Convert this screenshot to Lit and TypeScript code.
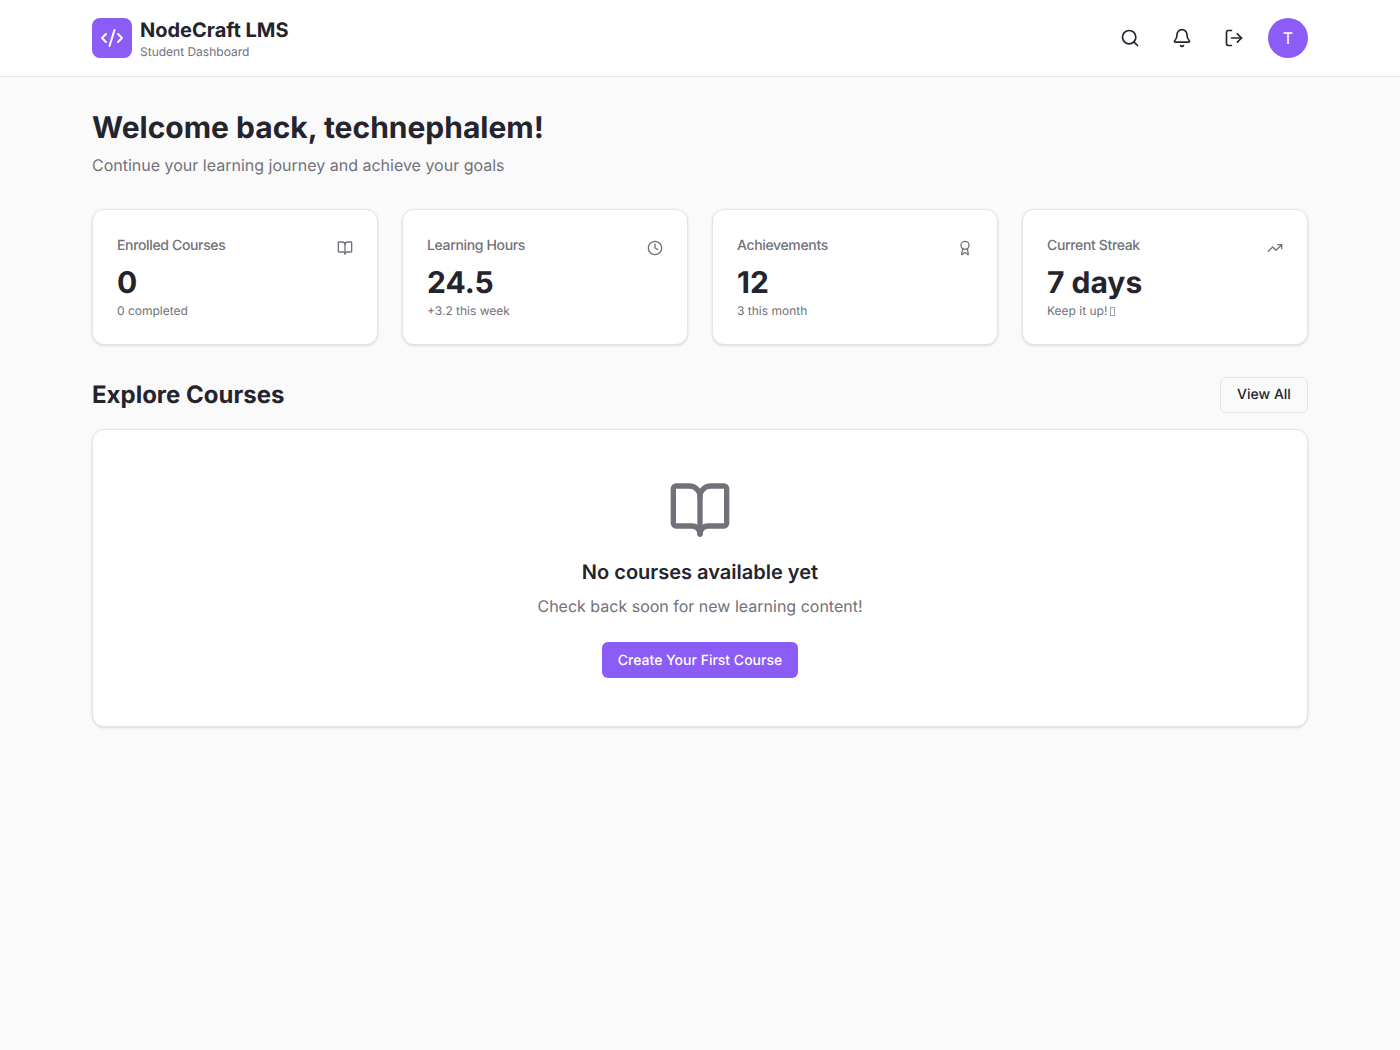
import { LitElement, html, css, svg } from "lit";
import { customElement } from "lit/decorators.js";

const icon = (size: number, sw: number, body: unknown) => html`<svg width=${size} height=${size} viewBox="0 0 24 24" fill="none" stroke="currentColor" stroke-width=${sw} stroke-linecap="round" stroke-linejoin="round">${body}</svg>`;

const book = svg`<path d="M12 7v14"/><path d="M3 18a1 1 0 0 1-1-1V4a1 1 0 0 1 1-1h5a4 4 0 0 1 4 4 4 4 0 0 1 4-4h5a1 1 0 0 1 1 1v13a1 1 0 0 1-1 1h-6a3 3 0 0 0-3 3 3 3 0 0 0-3-3z"/>`;
const clock = svg`<circle cx="12" cy="12" r="10"/><path d="M12 6v6l4 2"/>`;
const award = svg`<path d="m15.477 12.89 1.515 8.526a.5.5 0 0 1-.81.47l-3.58-2.687a1 1 0 0 0-1.197 0l-3.586 2.686a.5.5 0 0 1-.81-.469l1.514-8.526"/><circle cx="12" cy="8" r="6"/>`;
const trending = svg`<path d="M16 7h6v6"/><path d="m22 7-8.5 8.5-5-5L2 17"/>`;
const search = svg`<path d="m21 21-4.34-4.34"/><circle cx="11" cy="11" r="8"/>`;
const bell = svg`<path d="M10.268 21a2 2 0 0 0 3.464 0"/><path d="M3.262 15.326A1 1 0 0 0 4 17h16a1 1 0 0 0 .74-1.673C19.41 13.956 18 12.499 18 8A6 6 0 0 0 6 8c0 4.499-1.411 5.956-2.738 7.326"/>`;
const logout = svg`<path d="m16 17 5-5-5-5"/><path d="M21 12H9"/><path d="M9 21H5a2 2 0 0 1-2-2V5a2 2 0 0 1 2-2h4"/>`;
const code = svg`<path d="m18 16 4-4-4-4"/><path d="m6 8-4 4 4 4"/><path d="m14.5 4-5 16"/>`;

const stats = [
  { label: "Enrolled Courses", value: "0", note: "0 completed", ic: book },
  { label: "Learning Hours", value: "24.5", note: "+3.2 this week", ic: clock },
  { label: "Achievements", value: "12", note: "3 this month", ic: award },
  { label: "Current Streak", value: "7 days", note: "Keep it up!", ic: trending, tofu: true },
];

@customElement("app-root")
export class AppRoot extends LitElement {
  static styles = css`
    :host {
      display: block;
      min-height: 1050px;
      background: #fafafa;
      color: #24242e;
      font-family: Inter, "Liberation Sans", sans-serif;
      -webkit-font-smoothing: antialiased;
      text-rendering: geometricPrecision;
    }
    header {
      height: 76px;
      background: #fff;
      border-bottom: 1px solid #e4e4e7;
    }
    .bar {
      width: 1216px;
      height: 100%;
      margin: 0 auto;
      display: flex;
      align-items: center;
      justify-content: space-between;
    }
    .brand { display: flex; align-items: center; gap: 8px; }
    .logo {
      width: 40px;
      height: 40px;
      border-radius: 8px;
      background: #8b5cf6;
      color: #fff;
      display: flex;
      align-items: center;
      justify-content: center;
    }
    .name { font-size: 20px; line-height: 28px; font-weight: 700; }
    .sub { font-size: 12px; line-height: 16px; color: #71717a; }
    .actions { display: flex; align-items: center; gap: 16px; }
    .iconbtn {
      width: 36px;
      height: 36px;
      display: flex;
      align-items: center;
      justify-content: center;
    }
    .avatar {
      width: 40px;
      height: 40px;
      border-radius: 50%;
      background: #8b5cf6;
      color: #fff;
      font-size: 16px;
      display: flex;
      align-items: center;
      justify-content: center;
    }
    main { width: 1216px; margin: 0 auto; padding-top: 32px; }
    h1 { margin: 0; font-size: 30px; line-height: 38px; font-weight: 700; }
    .lead { margin: 6px 0 0; font-size: 16px; line-height: 24px; color: #71717a; }
    .stats {
      display: grid;
      grid-template-columns: repeat(4, 1fr);
      gap: 24px;
      margin-top: 32px;
    }
    .card {
      background: #fff;
      border: 1px solid #e4e4e7;
      border-radius: 12px;
      box-shadow: 0 1px 3px rgba(0,0,0,.1), 0 1px 2px -1px rgba(0,0,0,.1);
    }
    .stat { padding: 24px; height: 136px; box-sizing: border-box; }
    .stat-top { display: flex; justify-content: space-between; color: #71717a; }
    .stat-label { font-size: 14px; line-height: 24px; font-weight: 500; letter-spacing: -0.025em; }
    .stat-top svg { margin-top: 6px; }
    .stat-value { font-size: 30px; line-height: 36px; font-weight: 700; margin-top: 7px; }
    .stat-note { font-size: 12px; line-height: 16px; color: #71717a; margin-top: 2px; }
    .tofu {
      display: inline-block;
      width: 3px;
      height: 7px;
      margin-left: 3px;
      border: 1px solid #a1a1aa;
      vertical-align: -1px;
    }
    .section { display: flex; justify-content: space-between; align-items: center; margin-top: 32px; }
    h2 { margin: 0; font-size: 24px; line-height: 32px; font-weight: 700; }
    .outline {
      width: 88px;
      height: 36px;
      padding: 0 0 2px;
      background: #fafafa;
      border: 1px solid #e4e4e7;
      border-radius: 6px;
      font: 500 14px Inter, sans-serif;
      color: #24242e;
      text-rendering: geometricPrecision;
    }
    .empty {
      margin-top: 16px;
      height: 298px;
      box-sizing: border-box;
      display: flex;
      flex-direction: column;
      align-items: center;
      padding-top: 48px;
    }
    .empty-icon { color: #71717a; height: 64px; }
    .empty h3 { margin: 16px 0 0; font-size: 20px; line-height: 28px; font-weight: 600; }
    .empty p { margin: 8px 0 0; font-size: 16px; line-height: 24px; color: #71717a; }
    .primary {
      margin-top: 24px;
      width: 196px;
      height: 36px;
      padding: 0;
      border: none;
      border-radius: 6px;
      background: #8b5cf6;
      color: #fff;
      font: 500 14px Inter, sans-serif;
      text-rendering: geometricPrecision;
    }
  `;

  render() {
    return html`
      <header>
        <div class="bar">
          <div class="brand">
            <div class="logo">${icon(24, 2, code)}</div>
            <div>
              <div class="name">NodeCraft LMS</div>
              <div class="sub">Student Dashboard</div>
            </div>
          </div>
          <div class="actions">
            <div class="iconbtn">${icon(20, 2, search)}</div>
            <div class="iconbtn">${icon(20, 2, bell)}</div>
            <div class="iconbtn">${icon(20, 2, logout)}</div>
            <div class="avatar">T</div>
          </div>
        </div>
      </header>
      <main>
        <h1>Welcome back, technephalem!</h1>
        <p class="lead">Continue your learning journey and achieve your goals</p>
        <div class="stats">
          ${stats.map((s) => html`
            <div class="card stat">
              <div class="stat-top">
                <span class="stat-label">${s.label}</span>
                ${icon(16, 2, s.ic)}
              </div>
              <div class="stat-value">${s.value}</div>
              <div class="stat-note">${s.note}${s.tofu ? html`<span class="tofu"></span>` : ""}</div>
            </div>
          `)}
        </div>
        <div class="section">
          <h2>Explore Courses</h2>
          <button class="outline">View All</button>
        </div>
        <div class="card empty">
          <div class="empty-icon">${icon(64, 2, book)}</div>
          <h3>No courses available yet</h3>
          <p>Check back soon for new learning content!</p>
          <button class="primary">Create Your First Course</button>
        </div>
      </main>
    `;
  }
}
